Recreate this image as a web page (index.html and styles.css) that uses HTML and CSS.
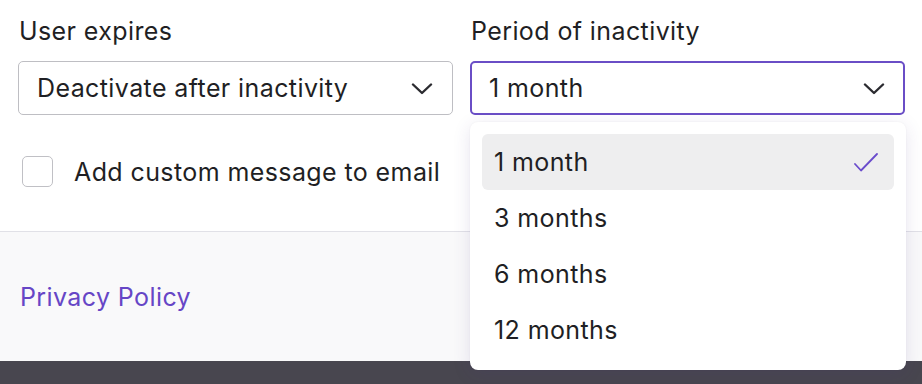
FILE: index.html
```html
<!DOCTYPE html>
<html>
<head>
<meta charset="utf-8">
<link rel="stylesheet" href="styles.css">
</head>
<body>
<div class="main">
  <div class="fields">
    <div class="field">
      <div class="label">User expires</div>
      <div class="select">
        <span class="value">Deactivate after inactivity</span>
        <svg class="chev" width="22" height="12" viewBox="0 0 22 12"><path d="M2 1.5 L11 10 L20 1.5" fill="none" stroke="#2b2b30" stroke-width="2.4" stroke-linecap="round" stroke-linejoin="round"/></svg>
      </div>
    </div>
    <div class="field">
      <div class="label">Period of inactivity</div>
      <div class="select-wrap">
        <div class="select focused">
          <span class="value">1 month</span>
          <svg class="chev" width="22" height="12" viewBox="0 0 22 12"><path d="M2 1.5 L11 10 L20 1.5" fill="none" stroke="#2b2b30" stroke-width="2.4" stroke-linecap="round" stroke-linejoin="round"/></svg>
        </div>
        <div class="menu">
          <div class="item active"><span>1 month</span>
            <svg class="check" width="24" height="19" viewBox="0 0 24 19"><path d="M1 11 L7 17.5 L23 1" fill="none" stroke="#6a4ccc" stroke-width="1.8" stroke-linecap="round" stroke-linejoin="round"/></svg>
          </div>
          <div class="item"><span>3 months</span></div>
          <div class="item"><span>6 months</span></div>
          <div class="item"><span>12 months</span></div>
        </div>
      </div>
    </div>
  </div>
  <label class="check-row">
    <span class="box"></span>
    <span class="check-text">Add custom message to email</span>
  </label>
</div>
<div class="footer">
  <a class="link">Privacy Policy</a>
</div>
<div class="band"></div>
</body>
</html>
```
FILE: styles.css
```css
* { box-sizing: border-box; }
html, body { margin: 0; padding: 0; }
body {
  font-family: Inter, "Noto Sans", sans-serif;
  color: #1f1f24;
  background: #ffffff;
  width: 922px;
  height: 384px;
  overflow: hidden;
  font-size: 25px;
  letter-spacing: 0.4px;
}
.main {
  padding: 17px 17px 44px 18px;
  background: #ffffff;
  border-bottom: 1px solid #e1e1e7;
}
.fields {
  display: grid;
  grid-template-columns: 435px 435px;
  column-gap: 17px;
}
.label {
  line-height: 28px;
  margin-bottom: 16px;
  padding-left: 1px;
}
.select-wrap { position: relative; }
.select {
  height: 54px;
  border: 1px solid #bebec3;
  border-radius: 5px;
  display: flex;
  align-items: center;
  justify-content: space-between;
  padding: 0 19px 0 18px;
  background: #fff;
}
.select.focused {
  border: 2px solid #6a4ec6;
  padding: 0 18px 0 17px;
}
.chev { display: block; margin-top: 2px; }
.menu {
  position: absolute;
  top: 61px;
  left: 0;
  width: 436px;
  background: #ffffff;
  border-radius: 8px;
  padding: 12px;
  box-shadow: 0 4px 18px rgba(70, 50, 130, 0.13), 0 0 2px rgba(0,0,0,0.05);
  z-index: 5;
}
.item {
  height: 56px;
  display: flex;
  align-items: center;
  justify-content: space-between;
  padding: 0 16px 0 12px;
  border-radius: 6px;
}
.item.active { background: #eeeeef; }
.check { display: block; }
.check-row {
  display: flex;
  align-items: center;
  margin-top: 41px;
  margin-left: 4px;
  height: 31px;
}
.box {
  width: 31px;
  height: 31px;
  border: 1.5px solid #c0c0c5;
  border-radius: 5px;
  background: #fff;
  flex: none;
}
.check-text {
  margin-left: 21px;
  line-height: 28px;
}
.footer {
  height: 129px;
  background: #f9f9fa;
  display: flex;
  align-items: center;
  padding-left: 20px;
}
.link {
  color: #6646c6;
  line-height: 28px;
}
.band {
  height: 23px;
  background: #48464f;
}
```
